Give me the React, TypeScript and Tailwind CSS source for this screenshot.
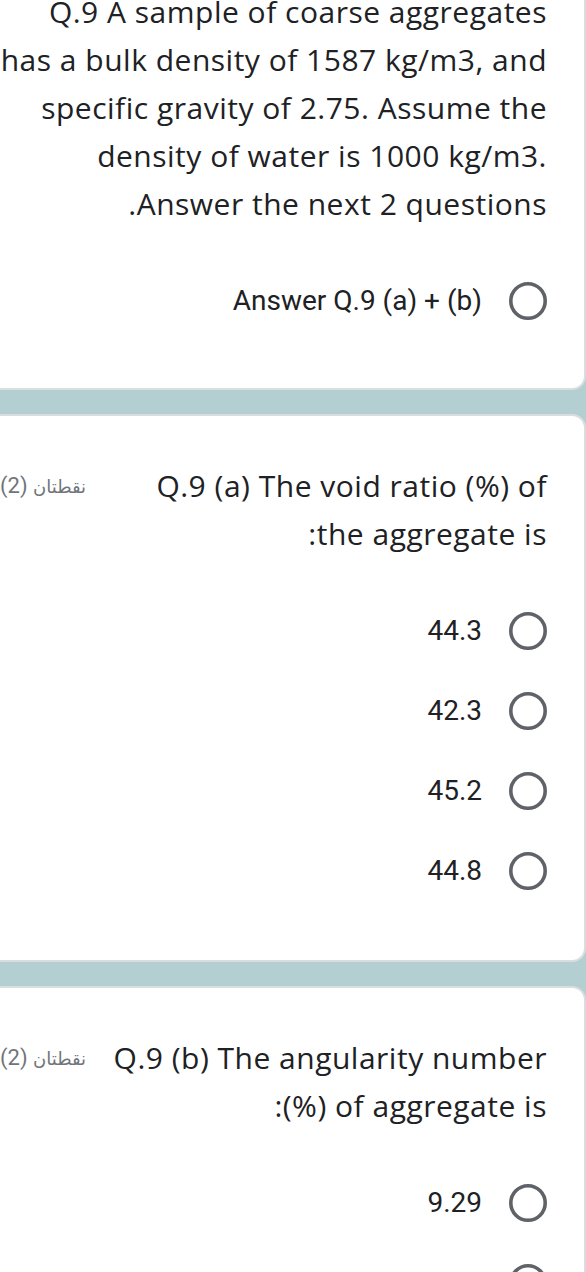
const titleFont = { fontFamily: '"Open Sans", "DejaVu Sans", sans-serif' };

type Question = {
  title: string[];
  points?: boolean;
  options: string[];
};

const questions: Question[] = [
  {
    title: [
      "Q.9 A sample of coarse aggregates",
      "has a bulk density of 1587 kg/m3, and",
      "specific gravity of 2.75. Assume the",
      "density of water is 1000 kg/m3.",
      ".Answer the next 2 questions",
    ],
    options: ["Answer Q.9 (a) + (b)"],
  },
  {
    title: ["Q.9 (a) The void ratio (%) of", ":the aggregate is"],
    points: true,
    options: ["44.3", "42.3", "45.2", "44.8"],
  },
  {
    title: ["Q.9 (b) The angularity number", ":(%) of aggregate is"],
    points: true,
    options: ["9.29", "9.87"],
  },
];

function Radio() {
  return (
    <svg width="38" height="38" viewBox="0 0 38 38" className="shrink-0">
      <circle cx="19" cy="19" r="17.2" fill="none" stroke="#5f6368" strokeWidth="3.6" />
    </svg>
  );
}

function QuestionCard({ q, first }: { q: Question; first?: boolean }) {
  return (
    <div
      className={`-ml-[24px] bg-white border-2 border-[#dadce0] rounded-[14px] pl-[22px] pr-[37px] ${
        first ? "-mt-[62px] pt-[48px] pb-[47px]" : "pt-[46px] pb-[49px]"
      }`}
    >
      <div className="flex flex-row justify-between items-start">
        <div
          dir="ltr"
          className="text-right text-[#202124] text-[30px] leading-[48px] tracking-[0.5px]"
          style={titleFont}
        >
          {q.title.map((line) => (
            <div key={line} className="whitespace-nowrap">{line}</div>
          ))}
        </div>
        {q.points && (
          <span className="leading-[48px] text-[#70757a] whitespace-nowrap text-[22px] font-['Roboto','DejaVu_Sans',sans-serif]">
            <span className="text-[18px]">نقطتان</span> (2)
          </span>
        )}
      </div>

      <div className="mt-[33px] flex flex-col">
        {q.options.map((opt) => (
          <label key={opt} className="h-20 flex flex-row items-center gap-[27px]">
            <Radio />
            <span dir="ltr" className="text-[28px] text-[#202124] font-['Roboto',sans-serif]">
              {opt}
            </span>
          </label>
        ))}
      </div>
    </div>
  );
}

export default function App() {
  return (
    <div dir="rtl" className="w-[586px] h-[1272px] overflow-hidden bg-[#b4cfd1] flex flex-col gap-6">
      {questions.map((q, i) => (
        <QuestionCard key={i} q={q} first={i === 0} />
      ))}
    </div>
  );
}
